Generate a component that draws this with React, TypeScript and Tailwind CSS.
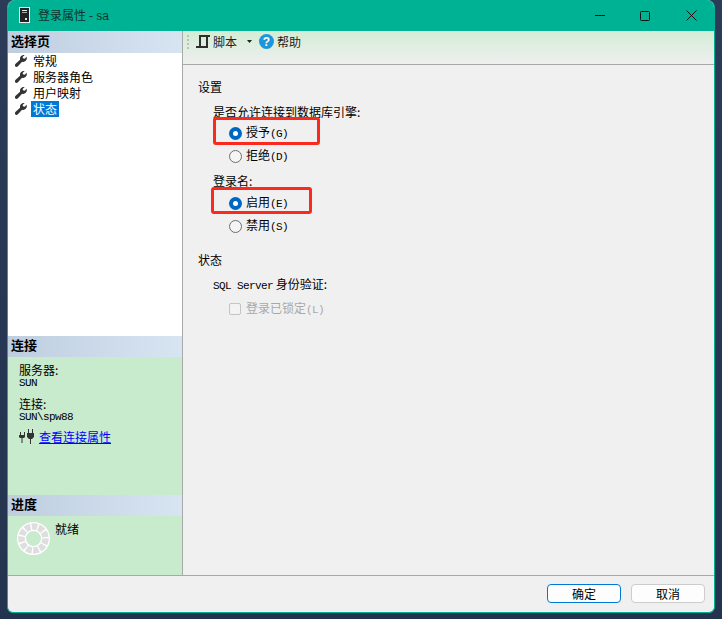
import type { ReactNode } from "react"

const cjk = "font-['Noto_Sans_CJK_SC',sans-serif]"

// latin part of the dialog is a 6px wide bitmap font, so it gets its own size
const L = ({ children }: { children: ReactNode }) => (
    <span className="font-['Liberation_Mono',monospace] text-[11px] tracking-[-0.6px]">{children}</span>
)

const Wrench = () => (
    <svg width="12" height="12" viewBox="0 0 12 12" className="shrink-0">
        <path d="M11.800 1.800 9.600 3.800 8 3.300 7.600 1.900 9.700 0C7.200-.4 4.900 1.200 5 3.800c0 .4 0 .7.100 1L.6 8.800c-1 1-.9 2.100-.2 2.700.7.600 1.700.5 2.500-.3l4.200-4.400c2.800.9 5.400-1.800 4.700-5z" fill="#333333" />
    </svg>
)

const SectionHeader = ({ title, tall }: { title: string; tall?: boolean }) => (
    <div className={`${tall ? "h-[22px] leading-[19px]" : "h-[21px] leading-[17px]"} shrink-0 bg-gradient-to-r from-[#bfcedf] to-[#d7e5f3] pl-[3px] text-[13px] font-bold text-black`}>
        {title}
    </div>
)

const NavItem = ({ label, active }: { label: string; active?: boolean }) => (
    <div className="flex h-4 items-center pl-[7px]">
        <Wrench />
        <span className={active ? "ml-[4px] bg-[#0078d7] px-[2px] text-white" : "ml-[6px] text-black"}>{label}</span>
    </div>
)

const Radio = ({ label, mnemonic, checked }: { label: string; mnemonic: string; checked?: boolean }) => (
    <div className="flex h-4 items-center pl-[16px]">
        {checked ? (
            <span className="flex h-[13px] w-[13px] items-center justify-center rounded-full bg-[#0067c0]">
                <span className="h-[5px] w-[5px] rounded-full bg-white" />
            </span>
        ) : (
            <span className="h-[13px] w-[13px] rounded-full border border-[#6e6e6e] bg-[#f5f5f5]" />
        )}
        <span className="ml-[4px]">
            {label}
            <L>({mnemonic})</L>
        </span>
    </div>
)

const RedBox = ({ className }: { className: string }) => (
    <div className={`absolute rounded-[3px] border-[3px] border-[#fa2a1e] ${className}`} />
)

const App = () => {
    return (
        <div className={`h-[619px] w-[722px] overflow-hidden bg-gradient-to-b from-[#2b3b58] to-[#24344f] pl-[7px] text-[12px] leading-4 text-black ${cjk}`}>
            <div className="flex h-[613px] w-[708px] flex-col overflow-hidden rounded-t-[8px] rounded-b-[6px] border-x border-b border-[#00b294] bg-[#f0f0f0]">
                {/* title bar */}
                <div className="flex h-[31px] shrink-0 items-center bg-[#00b294] pl-[11px]">
                    <svg width="11" height="16" viewBox="0 0 11 16" className="-mt-[1px]">
                        <rect x="0.5" y="0.5" width="10" height="15" fill="#222" stroke="#eee" />
                        <rect x="3" y="3" width="5" height="1" fill="#eee" />
                        <rect x="3" y="5" width="5" height="1" fill="#aaa" />
                        <rect x="6" y="11" width="2" height="2" fill="#ddd" />
                    </svg>
                    <span className="ml-[8px] text-[#14322c]">
                        登录属性<span className="ml-[3px] font-['Liberation_Sans',sans-serif]">- sa</span>
                    </span>
                    <div className="ml-auto flex items-center pr-[17px]">
                        <svg width="11" height="11" viewBox="0 0 11 11">
                            <path d="M0 5.500h10" stroke="#111" strokeWidth="1" />
                        </svg>
                        <svg width="10" height="10" viewBox="0 0 10 10" className="ml-[34px]">
                            <rect x="0.500" y="0.500" width="9" height="9" rx="1" fill="none" stroke="#111" />
                        </svg>
                        <svg width="11" height="11" viewBox="0 0 11 11" className="ml-[36px]">
                            <path d="M.5.500l10 10M10.500.500l-10 10" stroke="#111" />
                        </svg>
                    </div>
                </div>

                <div className="flex h-[544px] shrink-0">
                    {/* left side */}
                    <div className="flex w-[175px] shrink-0 flex-col border-r border-[#a9a9a9]">
                        <SectionHeader title="选择页" tall />
                        <div className="h-[283px] shrink-0 bg-white">
                            <NavItem label="常规" />
                            <NavItem label="服务器角色" />
                            <NavItem label="用户映射" />
                            <NavItem label="状态" active />
                        </div>
                        <SectionHeader title="连接" />
                        <div className="h-[138px] shrink-0 bg-[#c8ebcd] pt-[7px] pl-[11px] text-[12px] leading-[12px]">
                            <div>服务器:</div>
                            <div className="-mt-[1px]"><L>SUN</L></div>
                            <div className="mt-[9px]">连接:</div>
                            <div className="-mt-[1px]"><L>SUN\spw88</L></div>
                            <div className="mt-[6px] flex items-center">
                                <svg width="16" height="15" viewBox="0 0 16 15">
                                    <path d="M1 3h1v3H1zM5 3h1v3H5zM0 6h6v2L5 9H1L0 8zM2.500 9h1v5h-1zM9 0h1v4H9zM13 0h1v4h-1zM8 4h7v4l-2 2h-3L8 8zM11 10h1v5h-1z" fill="#333333" />
                                </svg>
                                <a href="#" className="ml-[4px] text-[#0000ff] underline">查看连接属性</a>
                            </div>
                        </div>
                        <SectionHeader title="进度" />
                        <div className="flex flex-1 bg-[#c8ebcd] pt-[6px] pl-[9px]">
                            <svg width="33" height="33" viewBox="0 0 33 33">
                                <circle cx="16.500" cy="16.500" r="12" fill="none" stroke="#fff" strokeWidth="9" />
                                <circle cx="16.500" cy="16.500" r="12" fill="none" stroke="#dedede" strokeWidth="6.500" strokeDasharray="5.500 1.300" />
                            </svg>
                            <span className="-mt-[1px] ml-[5px]">就绪</span>
                        </div>
                    </div>

                    {/* right side */}
                    <div className="relative flex min-w-0 flex-1 flex-col">
                        <div className="flex h-[33px] shrink-0 bg-gradient-to-b from-[#d3edd5] to-[#efefef] pl-[3px]">
                            <div className="flex h-[21px] items-center">
                                <svg width="3" height="15" viewBox="0 0 3 15">
                                    <path d="M1 1h2v2H1zM1 5h2v2H1zM1 9h2v2H1zM1 13h2v2H1z" fill="#b5c5b5" />
                                </svg>
                                <svg width="14" height="14" viewBox="0 0 14 14" className="ml-[7px]">
                                    <path d="M3 0h11v2h-2v11H0v-2h3zM5 2v9h5V2z" fill="#2e2e2e" />
                                </svg>
                                <span className="ml-[3px] text-[#222]">脚本</span>
                                <svg width="5" height="3" viewBox="0 0 5 3" className="ml-[10px]">
                                    <path d="M0 0h5L2.500 3z" fill="#222" />
                                </svg>
                                <span className="ml-[7px] flex h-[15px] w-[15px] items-center justify-center rounded-full bg-[#1e96dc] font-['Liberation_Sans',sans-serif] text-[12px] font-bold text-white">?</span>
                                <span className="ml-[3px] text-[#222]">帮助</span>
                            </div>
                        </div>
                        <div className="flex-1 border-t border-[#a9a9a9] pt-[14px] pl-[15px]">
                            <div>设置</div>
                            <div className="mt-[9px] pl-[15px]">
                                <div>是否允许连接到数据库引擎:</div>
                                <div className="mt-[5px]">
                                    <Radio label="授予" mnemonic="G" checked />
                                </div>
                                <div className="mt-[7px]">
                                    <Radio label="拒绝" mnemonic="D" />
                                </div>
                                <div className="mt-[9px]">登录名:</div>
                                <div className="mt-[6px]">
                                    <Radio label="启用" mnemonic="E" checked />
                                </div>
                                <div className="mt-[7px]">
                                    <Radio label="禁用" mnemonic="S" />
                                </div>
                            </div>
                            <div className="mt-[18px]">状态</div>
                            <div className="mt-[8px] pl-[15px]">
                                <div><L>SQL Server</L> 身份验证:</div>
                                <div className="mt-[7px] flex h-4 items-center pl-[16px] text-[#a8a8a8]">
                                    <span className="h-[12px] w-[12px] rounded-[2px] border border-[#c4c4c4] bg-[#f3f3f3]" />
                                    <span className="ml-[5px]">登录已锁定<L>(L)</L></span>
                                </div>
                            </div>
                        </div>
                        {/* annotation boxes drawn over the screenshot */}
                        <RedBox className="top-[86px] left-[30px] h-[28px] w-[107px]" />
                        <RedBox className="top-[156px] left-[28px] h-[27px] w-[101px]" />
                    </div>
                </div>

                {/* footer */}
                <div className="flex flex-1 justify-end border-t border-[#a9a9a9] pt-[8px] pr-[9px]">
                    <button className="h-[19px] w-[74px] rounded-[4px] border border-[#0078d4] bg-[#fdfdfd] text-[12px] leading-[17px]">确定</button>
                    <button className="ml-[10px] h-[19px] w-[74px] rounded-[4px] border border-[#cccccc] bg-[#fdfdfd] text-[12px] leading-[17px]">取消</button>
                </div>
            </div>
        </div>
    )
}

export default App
